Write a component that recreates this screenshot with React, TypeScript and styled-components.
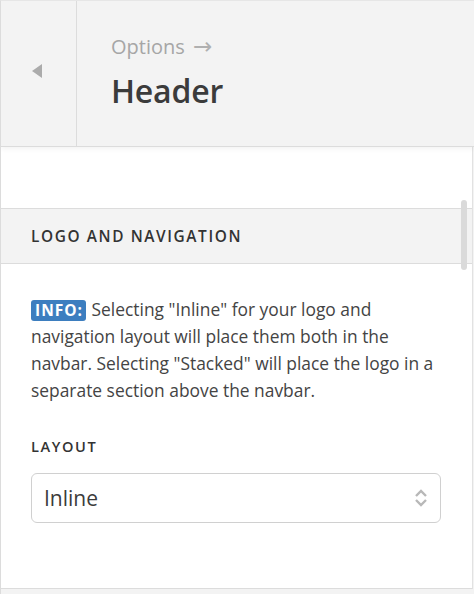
import styled, { createGlobalStyle } from "styled-components"

const GlobalStyle = createGlobalStyle`
  html, body {
    margin: 0;
    padding: 0;
    background: #f3f3f3;
  }
  body {
    font-family: "Open Sans", "Liberation Sans", sans-serif;
    -webkit-font-smoothing: antialiased;
  }
`

const Panel = styled.div`
  position: relative;
  width: 474px;
  height: 594px;
  display: flex;
  flex-direction: column;
  overflow: hidden;
  box-sizing: border-box;
  border-left: 1px solid #dcdcdc;
  border-top: 1px solid #e6e6e6;
  background: #f3f3f3;
`

const TitleBar = styled.header`
  display: flex;
  height: 145px;
  flex-shrink: 0;
  background: #f3f3f3;
  border-bottom: 1px solid #dcdcdc;
  box-shadow: 0 2px 5px rgba(0, 0, 0, 0.05);
  position: relative;
  z-index: 1;
`

const BackButton = styled.button`
  width: 76px;
  border: none;
  border-right: 1px solid #dcdcdc;
  background: transparent;
  display: flex;
  align-items: center;
  justify-content: center;
  padding: 0 4px 6px 0;
  cursor: pointer;
`

const Triangle = styled.span`
  width: 0;
  height: 0;
  border-top: 7px solid transparent;
  border-bottom: 7px solid transparent;
  border-right: 10px solid #ababab;
`

const TitleBlock = styled.div`
  display: flex;
  flex-direction: column;
  justify-content: center;
  padding: 0 0 4px 34px;
`

const Crumb = styled.span`
  font-size: 20px;
  line-height: 28px;
  color: #a6a6a6;
`

const Arrow = styled.span`
  font-family: "DejaVu Sans", sans-serif;
  font-size: 23px;
  line-height: 20px;
  margin-left: 3px;
  color: #b0b0b0;
`

const Title = styled.h1`
  margin: 10px 0 0;
  font-size: 32px;
  line-height: 40px;
  font-weight: 600;
  color: #3b3b3b;
  letter-spacing: -0.2px;
`

const Body = styled.div`
  flex: 1;
  display: flex;
  flex-direction: column;
  background: #ffffff;
  border-right: 1px solid #e2e2e2;
  border-bottom: 1px solid #dcdcdc;
  margin-right: 1px;
  margin-bottom: 5px;
`

const Gap = styled.div`
  height: 61px;
`

const SectionHeader = styled.h3`
  margin: 0;
  height: 54px;
  display: flex;
  align-items: center;
  padding-left: 30px;
  background: #f3f3f3;
  border-top: 1px solid #dcdcdc;
  border-bottom: 1px solid #dcdcdc;
  font-size: 15.4px;
  font-weight: 600;
  letter-spacing: 1.6px;
  color: #333333;
`

const Content = styled.div`
  padding: 32px 26px 0 30px;
`

const Info = styled.p`
  margin: 0;
  font-size: 17.4px;
  line-height: 27px;
  color: #444444;
`

const Badge = styled.span`
  display: inline-block;
  background: #3d7ebf;
  color: #ffffff;
  font-weight: 700;
  font-size: 15.5px;
  line-height: 21px;
  letter-spacing: 1px;
  padding: 0 3px 0 4px;
  border-radius: 3px;
  margin-right: 1px;
`

const FieldLabel = styled.label`
  display: block;
  margin-top: 32px;
  font-size: 14.6px;
  font-weight: 600;
  letter-spacing: 1.6px;
  color: #333333;
`

const SelectBox = styled.div`
  margin-top: 17px;
  width: 410px;
  height: 50px;
  box-sizing: border-box;
  border: 1px solid #d0d0d0;
  border-radius: 6px;
  display: flex;
  align-items: center;
  justify-content: space-between;
  padding: 0 12px 0 12px;
  font-size: 21px;
  color: #3b3b3b;
`

const Scrollbar = styled.div`
  position: absolute;
  right: 7px;
  top: 199px;
  width: 6px;
  height: 70px;
  border-radius: 3px;
  background: #dadada;
`

function Chevrons() {
  return (
    <svg width="14" height="20" viewBox="0 0 14 20" fill="none" stroke="#b8b8b8" strokeWidth="2.4">
      <path d="M2 8 L7 3 L12 8" />
      <path d="M2 12 L7 17 L12 12" />
    </svg>
  )
}

export default function App() {
  return (
    <>
      <GlobalStyle />
      <Panel>
        <TitleBar>
          <BackButton aria-label="Back">
            <Triangle />
          </BackButton>
          <TitleBlock>
            <Crumb>
              Options <Arrow>→</Arrow>
            </Crumb>
            <Title>Header</Title>
          </TitleBlock>
        </TitleBar>
        <Body>
          <Gap />
          <SectionHeader>LOGO AND NAVIGATION</SectionHeader>
          <Content>
            <Info>
              <Badge>INFO:</Badge> Selecting "Inline" for your logo and navigation layout will
              place them both in the navbar. Selecting "Stacked" will place the logo in a separate
              section above the navbar.
            </Info>
            <FieldLabel>LAYOUT</FieldLabel>
            <SelectBox>
              <span>Inline</span>
              <Chevrons />
            </SelectBox>
          </Content>
        </Body>
        <Scrollbar />
      </Panel>
    </>
  )
}
